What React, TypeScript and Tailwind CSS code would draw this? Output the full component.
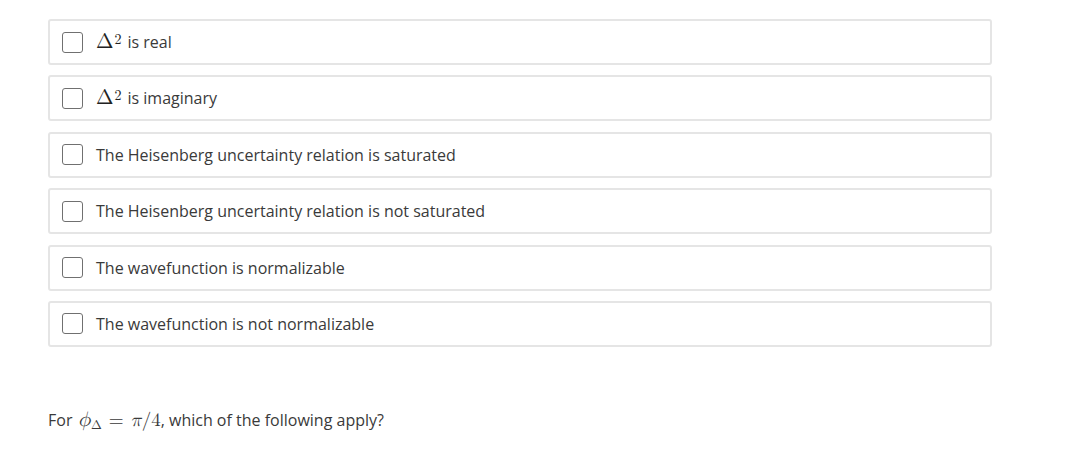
const options: { math?: boolean; label: string }[] = [
  { math: true, label: "is real" },
  { math: true, label: "is imaginary" },
  { label: "The Heisenberg uncertainty relation is saturated" },
  { label: "The Heisenberg uncertainty relation is not saturated" },
  { label: "The wavefunction is normalizable" },
  { label: "The wavefunction is not normalizable" },
];

const mathFont = "font-['Latin_Modern_Math','Liberation_Serif','DejaVu_Serif',serif]";

function DeltaSquared() {
  return (
    <span className={`${mathFont} text-[21px] leading-none mr-[6px] text-[#222]`}>
      Δ<sup className="text-[14px] relative -top-[4px] ml-[1px]">2</sup>
    </span>
  );
}

function OptionRow({ math, label }: { math?: boolean; label: string }) {
  return (
    <label className="flex items-center h-[46px] w-[944px] border-2 border-[#e5e5e5] rounded-[3px] pl-[12px] bg-white cursor-pointer">
      <span className="w-[21px] h-[21px] border border-[#707070] rounded-[3px] bg-white flex-shrink-0" />
      <span className="ml-[13px] text-[16px] text-[#3a3a3a] flex items-baseline">
        {math && <DeltaSquared />}
        {label}
      </span>
    </label>
  );
}

export default function App() {
  return (
    <div className="w-[1083px] h-[452px] bg-white font-['Open_Sans',sans-serif] pl-[48px] pt-[19px]">
      <div className="flex flex-col gap-[10.4px]">
        {options.map((o) => (
          <OptionRow key={o.label} math={o.math} label={o.label} />
        ))}
      </div>
      <p className="mt-[61px] text-[16px] leading-[24px] text-[#3a3a3a] flex items-baseline">
        For
        <span className={`${mathFont} italic text-[21px] leading-none ml-[5px]`}>ϕ</span>
        <span className={`${mathFont} text-[13px] leading-none relative top-[3px]`}>Δ</span>
        <span className={`${mathFont} text-[19px] leading-none mx-[7px]`}>=</span>
        <span className={`${mathFont} italic text-[19px] leading-none`}>π</span>
        <span className={`${mathFont} text-[19px] leading-none`}>/4</span>
        <span>, which of the following apply?</span>
      </p>
    </div>
  );
}
